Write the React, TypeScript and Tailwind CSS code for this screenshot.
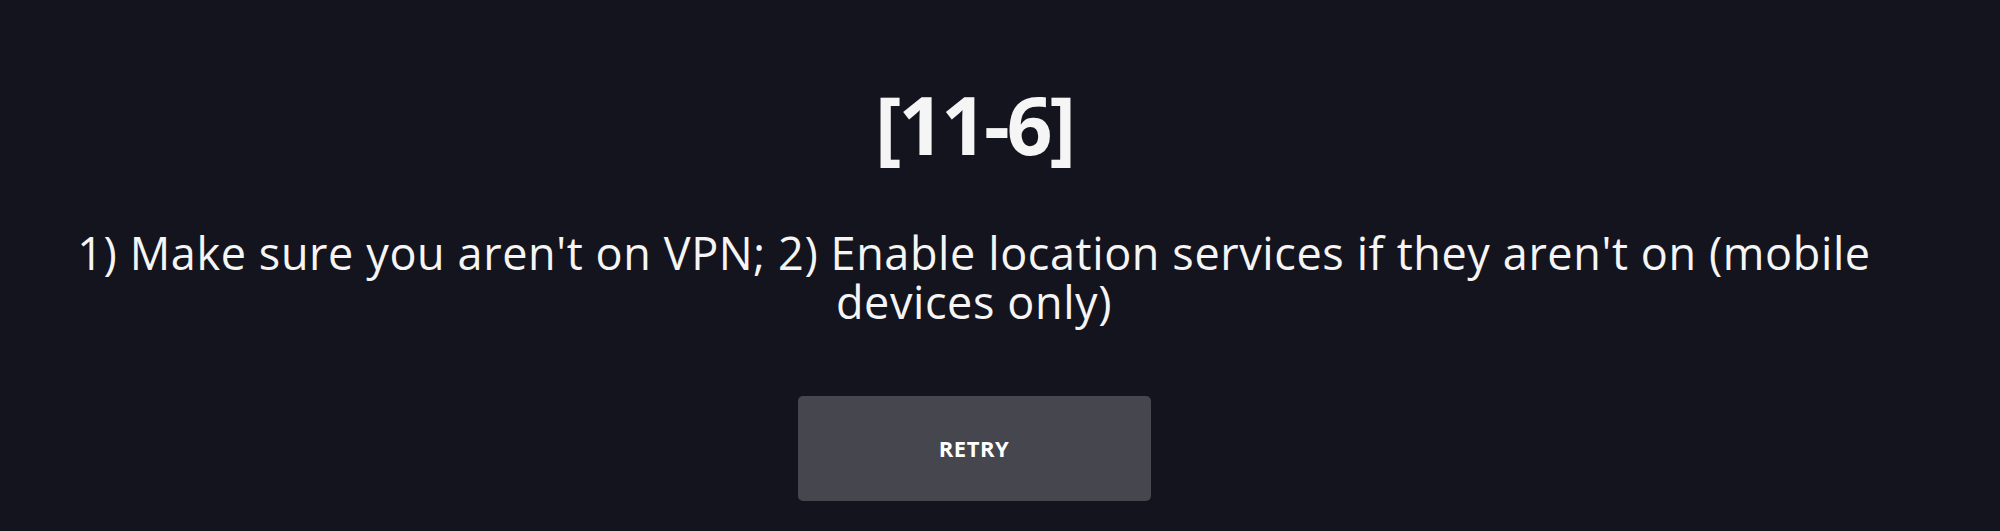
export default function App() {
  return (
    <div className="min-h-[531px] w-full bg-[#14141e] overflow-hidden font-['Open_Sans',sans-serif]">
      <div className="w-[1948px] flex flex-col items-center pt-[74px]">
        <h1 className="text-[80px] leading-[100px] font-bold text-[#f5f5f5] tracking-[-3px]">
          [11-6]
        </h1>
        <p className="mt-[54px] w-[1900px] text-center text-[45px] leading-[49px] tracking-[0.6px] text-[#f5f5f5]">
          1) Make sure you aren't on VPN; 2) Enable location services if they aren't on (mobile devices only)
        </p>
        <button className="mt-[70px] w-[353px] h-[105px] rounded-[5px] bg-[#46464f] text-white text-[22px] font-bold tracking-[0.5px]">
          RETRY
        </button>
      </div>
    </div>
  );
}
